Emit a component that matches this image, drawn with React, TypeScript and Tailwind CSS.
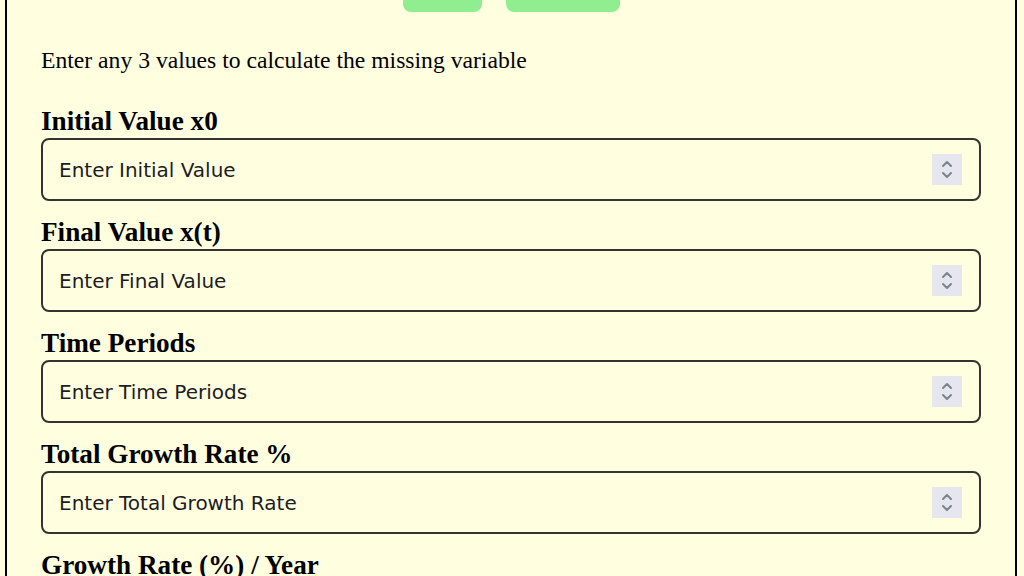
import React from 'react';

interface Field {
  label: string;
  placeholder: string;
}

const fields: Field[] = [
  { label: 'Initial Value x0', placeholder: 'Enter Initial Value' },
  { label: 'Final Value x(t)', placeholder: 'Enter Final Value' },
  { label: 'Time Periods', placeholder: 'Enter Time Periods' },
  { label: 'Total Growth Rate %', placeholder: 'Enter Total Growth Rate' },
  { label: 'Growth Rate (%) / Year', placeholder: 'Enter Growth Rate' },
];

const Spinner = () => (
  <div className="w-[30px] h-[31px] shrink-0 bg-[#e6e7ee]">
    <svg width="30" height="31" viewBox="0 0 30 31" fill="none">
      <polyline points="11,12 15,8 19,12" stroke="#7d828c" strokeWidth="2" strokeLinecap="round" strokeLinejoin="round" />
      <polyline points="11,19 15,23 19,19" stroke="#7d828c" strokeWidth="2" strokeLinecap="round" strokeLinejoin="round" />
    </svg>
  </div>
);

const App = () => {
  return (
    <div className="h-[576px] overflow-hidden bg-[#ffffe0]">
      <div className="ml-[5px] mr-[7px] -mt-[60px] border-2 border-black rounded-lg pt-[26px] px-[34px] pb-10">
        {/* Action buttons (scrolled mostly out of view) */}
        <div className="flex justify-center gap-6">
          <button className="w-[79px] h-[44px] rounded-lg bg-[#90ee90]" />
          <button className="w-[114px] h-[44px] rounded-lg bg-[#90ee90]" />
        </div>

        <p className="mt-[35px] font-['Liberation_Serif',serif] text-[23.65px] leading-[27px] text-black">
          Enter any 3 values to calculate the missing variable
        </p>

        <div className="mt-[32px]">
          {fields.map((f, i) => (
            <div key={f.label} className={i > 0 ? 'mt-[16px]' : ''}>
              <label className="block font-['Liberation_Serif',serif] font-bold text-[27.2px] leading-[30px] text-black">
                {f.label}
              </label>
              <div className="mt-[2px] h-[63px] flex items-center border-2 border-[#333] rounded-lg pl-[16px] pr-[17px]">
                <input
                  type="text"
                  inputMode="decimal"
                  placeholder={f.placeholder}
                  className="flex-1 min-w-0 bg-transparent outline-none font-['DejaVu_Sans',sans-serif] text-[20px] text-[#111] placeholder:text-[#1c1c24] mt-[1px]"
                />
                <Spinner />
              </div>
            </div>
          ))}
        </div>
      </div>
    </div>
  );
};

export default App;
